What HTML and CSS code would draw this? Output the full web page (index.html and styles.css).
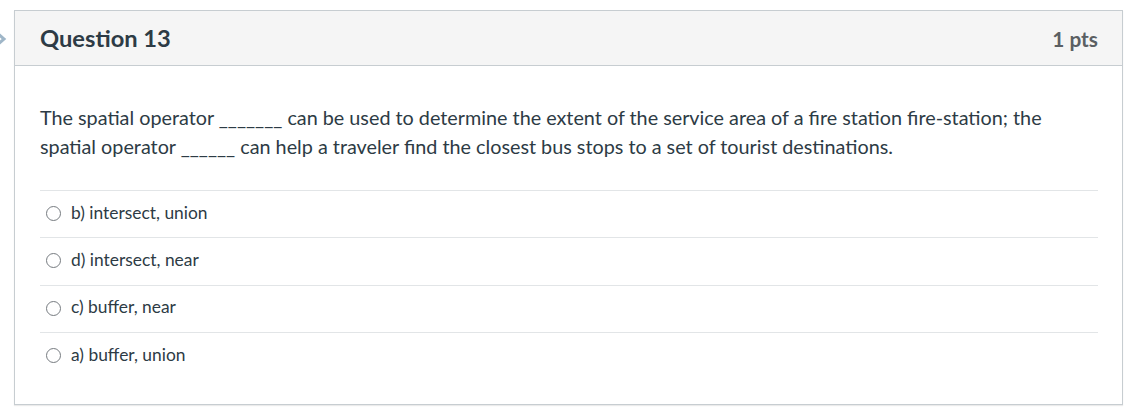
FILE: index.html
```html
<!DOCTYPE html>
<html>
<head>
<meta charset="utf-8">
<link rel="stylesheet" href="styles.css">
</head>
<body>
<div class="page">
  <svg class="flag" width="8" height="16" viewBox="0 0 8 16"><path d="M-4 1 L4 8 L-4 15" fill="none" stroke="#9fb6c8" stroke-width="3"/></svg>
  <div class="card">
    <div class="header">
      <span class="title">Question 13</span>
      <span class="pts">1 pts</span>
    </div>
    <div class="body">
      <p class="text">The spatial operator _______ can be used to determine the extent of the service area of a fire station fire-station; the spatial operator ______ can help a traveler find the closest bus stops to a set of tourist destinations.</p>
      <div class="answers">
        <label class="answer"><span class="radio"></span>b) intersect, union</label>
        <label class="answer"><span class="radio"></span>d) intersect, near</label>
        <label class="answer"><span class="radio"></span>c) buffer, near</label>
        <label class="answer"><span class="radio"></span>a) buffer, union</label>
      </div>
    </div>
  </div>
</div>
</body>
</html>
```
FILE: styles.css
```css
* { box-sizing: border-box; }
html, body { margin: 0; padding: 0; background: #fff; }
body { font-family: Lato, "Open Sans", sans-serif; color: #2d3b45; }
.page { position: relative; padding: 10px 0 0 14px; width: 1136px; height: 416px; }
.flag { position: absolute; left: 0; top: 31px; }
.card { width: 1109px; height: 395px; border: 1px solid #c7cdd1; box-shadow: 0 1px 1px rgba(0,0,0,0.08); }
.header { height: 55px; background: #f5f5f5; border-bottom: 1px solid #c7cdd1; display: flex; align-items: center; justify-content: space-between; padding: 0 24px 0 25px; }
.title { font-weight: 700; font-size: 23.7px; color: #2d3b45; }
.pts { font-weight: 700; font-size: 20.8px; color: #5b5f63; }
.body { padding: 37px 24px 0 25px; }
.text { margin: 0; font-size: 19.8px; line-height: 29px; padding: 0 40px 29px 0; }
.answer { display: flex; align-items: center; height: 47.3px; border-top: 1px solid #e2e5e7; font-size: 17.4px; padding: 0 0 4px 6px; }
.radio { width: 15px; height: 15px; border: 1px solid #767b80; border-radius: 50%; margin: 3px 10px 0 0; flex: none; }
```
